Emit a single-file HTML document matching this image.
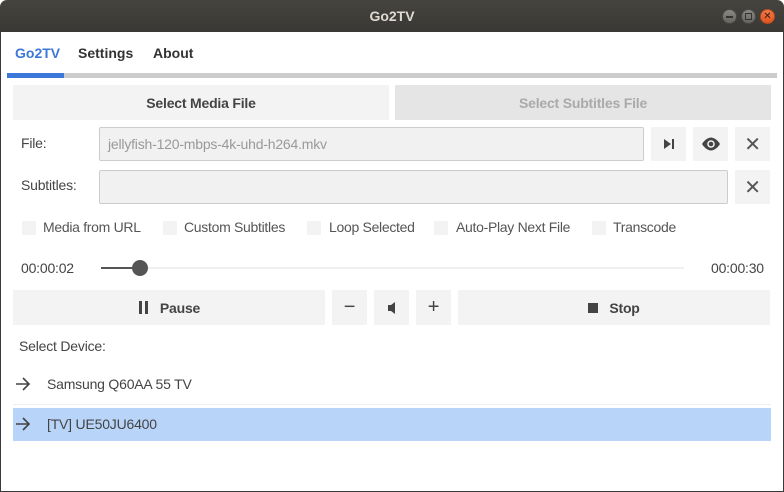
<!DOCTYPE html>
<html><head><meta charset="utf-8"><style>
*{box-sizing:border-box;margin:0;padding:0}
body{width:784px;height:492px;background:#fff;font-family:"Liberation Sans","DejaVu Sans",sans-serif;overflow:hidden;position:relative;color:#333}
.a{position:absolute}
.title{left:0;top:0;width:784px;height:32px;background:linear-gradient(#45443f,#393834);border-radius:7px 7px 0 0;color:#dfdbd2;font-weight:bold;font-size:14px;text-align:center;line-height:32px}
.frame{left:0;top:32px;width:784px;height:460px;border:1px solid #3a3a3a;border-top:none}
.wb{top:9px;width:15px;height:15px;border-radius:50%;background:linear-gradient(#8a8985,#65645f);border:1px solid #4a4945}
.btn{background:#f3f3f3;font-size:14px;font-weight:bold;color:#444;display:flex;align-items:center;justify-content:center;letter-spacing:-0.2px}
.in{background:#f1f1f1;border:1px solid #ccc;border-radius:2px;font-size:14px;color:#999;padding-left:8px;line-height:32px;letter-spacing:-0.2px}
.lbl{font-size:14px;color:#444;letter-spacing:-0.2px}
.cb{width:14px;height:14px;background:#f3f3f3;top:221px}
.cl{font-size:14px;color:#555;top:219px;letter-spacing:-0.3px}
.x{font-size:20px;color:#555;font-weight:normal}
</style></head><body>
<div class="a title">Go2TV</div>
<div class="a wb" style="left:722px"><div class="a" style="left:3px;top:6px;width:7px;height:1.5px;background:#333"></div></div>
<div class="a wb" style="left:741px"><div class="a" style="left:3px;top:3px;width:7px;height:7px;border:1px solid #333"></div></div>
<div class="a wb" style="left:760px;background:linear-gradient(#f47a4a,#e0541e);border-color:#b84b1e;color:#3a1a10;font-size:10px;text-align:center;line-height:13px">✕</div>
<div class="a frame"></div>
<div class="a" style="left:15px;top:45px;font-size:14px;font-weight:bold;color:#3b78d9">Go2TV</div>
<div class="a" style="left:78px;top:45px;font-size:14px;font-weight:bold;color:#333">Settings</div>
<div class="a" style="left:153px;top:45px;font-size:14px;font-weight:bold;color:#333">About</div>
<div class="a" style="left:7px;top:73px;width:770px;height:5px;background:#cccccc"></div>
<div class="a" style="left:7px;top:73px;width:57px;height:5px;background:#3b78d9"></div>
<div class="a btn" style="left:13px;top:85px;width:376px;height:35px">Select Media File</div>
<div class="a btn" style="left:395px;top:85px;width:376px;height:35px;background:#e5e5e5;color:#aaa">Select Subtitles File</div>
<div class="a lbl" style="left:21px;top:135px">File:</div>
<div class="a in" style="left:99px;top:127px;width:545px;height:34px">jellyfish-120-mbps-4k-uhd-h264.mkv</div>
<div class="a btn" style="left:651px;top:127px;width:35px;height:34px"><svg width="12" height="12"><path d="M1 1L8 6L1 11Z" fill="#444"/><rect x="9" y="1" width="2" height="10" fill="#444"/></svg></div>
<div class="a btn" style="left:693px;top:127px;width:35px;height:34px"><svg width="20" height="14" viewBox="0 0 20 14"><path d="M1 7C4 2 8 0.5 10 0.5S16 2 19 7C16 12 12 13.5 10 13.5S4 12 1 7Z" fill="#444"/><circle cx="10" cy="7" r="3.8" fill="#f3f3f3"/><circle cx="10" cy="7" r="2.3" fill="#444"/></svg></div>
<div class="a btn x" style="left:735px;top:127px;width:35px;height:34px">✕</div>
<div class="a lbl" style="left:21px;top:177px">Subtitles:</div>
<div class="a in" style="left:99px;top:170px;width:629px;height:34px"></div>
<div class="a btn x" style="left:735px;top:170px;width:35px;height:34px">✕</div>
<div class="a cb" style="left:22px"></div><div class="a cl" style="left:43px">Media from URL</div>
<div class="a cb" style="left:163px"></div><div class="a cl" style="left:184px">Custom Subtitles</div>
<div class="a cb" style="left:307px"></div><div class="a cl" style="left:329px">Loop Selected</div>
<div class="a cb" style="left:434px"></div><div class="a cl" style="left:456px">Auto-Play Next File</div>
<div class="a cb" style="left:592px"></div><div class="a cl" style="left:613px">Transcode</div>
<div class="a lbl" style="left:21px;top:260px;color:#444">00:00:02</div>
<div class="a lbl" style="left:711px;top:260px;color:#444">00:00:30</div>
<div class="a" style="left:101px;top:267px;width:583px;height:2px;background:#f0f0f0"></div>
<div class="a" style="left:101px;top:267px;width:38px;height:2px;background:#555"></div>
<div class="a" style="left:132px;top:260px;width:16px;height:16px;border-radius:50%;background:#555"></div>
<div class="a btn" style="left:13px;top:290px;width:312px;height:35px"><svg width="12" height="13" style="margin-right:10px"><rect x="1" y="0" width="3" height="13" fill="#444"/><rect x="7" y="0" width="3" height="13" fill="#444"/></svg>Pause</div>
<div class="a btn" style="left:332px;top:290px;width:35px;height:35px;font-size:20px;font-weight:normal">−</div>
<div class="a btn" style="left:374px;top:290px;width:35px;height:35px"><svg width="10" height="14"><path d="M1 4H4L8 1V13L4 10H1Z" fill="#444"/></svg></div>
<div class="a btn" style="left:416px;top:290px;width:35px;height:35px;font-size:20px;font-weight:normal">+</div>
<div class="a btn" style="left:458px;top:290px;width:312px;height:35px"><span style="display:inline-block;width:10px;height:10px;background:#444;margin-right:11px"></span>Stop</div>
<div class="a lbl" style="left:19px;top:338px">Select Device:</div>
<svg class="a" style="left:15px;top:377px" width="16" height="14"><path d="M1 7H14M8 1L14 7L8 13" stroke="#444" stroke-width="1.6" fill="none"/></svg>
<div class="a lbl" style="left:47px;top:376px">Samsung Q60AA 55 TV</div>
<div class="a" style="left:13px;top:404px;width:758px;height:1px;background:#f0f0f0"></div>
<div class="a" style="left:13px;top:408px;width:758px;height:33px;background:#b8d5f9"></div>
<svg class="a" style="left:15px;top:417px" width="16" height="14"><path d="M1 7H14M8 1L14 7L8 13" stroke="#444" stroke-width="1.6" fill="none"/></svg>
<div class="a lbl" style="left:47px;top:416px">[TV] UE50JU6400</div>
</body></html>
